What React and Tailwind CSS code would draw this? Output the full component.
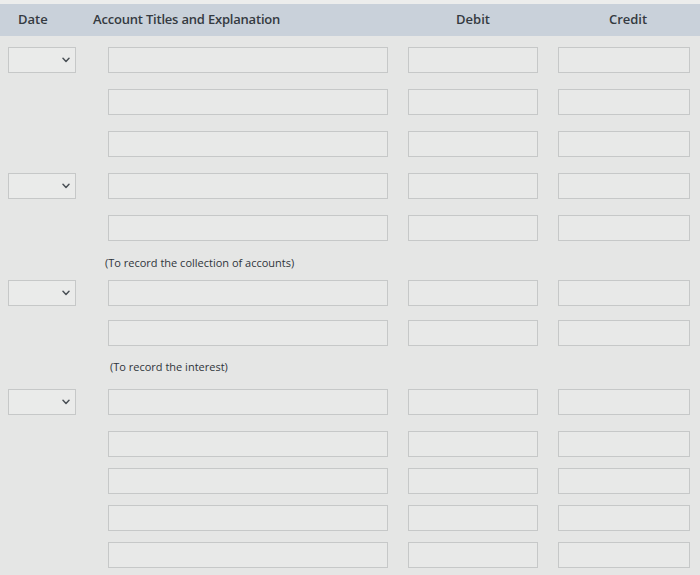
import { useState } from 'react'

// explanation lines under each journal entry
const NOTES = ['(To record the collection of accounts)', '(To record the interest)']

function Chevron() {
  return (
    <svg width="8" height="6" viewBox="0 0 8 6" className="text-[#4b5157]">
      <path d="M1 1.2 L4 4.4 L7 1.2" fill="none" stroke="currentColor" strokeWidth="1.5" strokeLinecap="round" strokeLinejoin="round" />
    </svg>
  )
}

function Box({ className = '' }) {
  return (
    <input
      type="text"
      className={`h-[26px] bg-[#e8e9e8] border border-[#c6c8c8] outline-none px-2 text-[12px] ${className}`}
    />
  )
}

function Row({ withDate, className = '' }) {
  const [val, setVal] = useState('')
  return (
    <div className={`flex items-center h-[26px] ${className}`}>
      <div className="w-[68px]">
        {withDate && (
          <div className="relative h-[26px] w-[68px] bg-[#eaebea] border border-[#c6c8c8] flex items-center justify-end pr-[5px]">
            <select
              value={val}
              onChange={e => setVal(e.target.value)}
              className="absolute inset-0 opacity-0"
            >
              <option value=""></option>
            </select>
            <Chevron />
          </div>
        )}
      </div>
      <Box className="ml-[32px] w-[280px]" />
      <Box className="ml-[20px] w-[130px]" />
      <Box className="ml-[20px] w-[132px]" />
    </div>
  )
}

export default function App() {
  return (
    <div className="w-[700px] h-[575px] overflow-hidden bg-[#e5e6e5] font-['Open_Sans',sans-serif] text-[#2f353b]">
      <div className="h-[4px] bg-[#ecedec]" />
      {/* Header */}
      <div className="h-[32px] bg-[#c9d1da] flex items-center text-[13px] font-semibold text-[#343a41]">
        <div className="w-[93px] pl-[18px]">Date</div>
        <div className="w-[315px] tracking-[-0.2px]">Account Titles and Explanation</div>
        <div className="w-[130px] text-center">Debit</div>
        <div className="w-[20px]" />
        <div className="w-[140px] text-center">Credit</div>
      </div>

      <div className="pl-[8px] pt-[11px] flex flex-col">
        {/* entry 1 */}
        <div className="flex flex-col gap-4">
          <Row withDate />
          <Row />
          <Row />
          <Row withDate />
          <Row />
        </div>
        <p className="mt-[14px] ml-[97px] text-[11px] leading-4">{NOTES[0]}</p>

        {/* entry 2 */}
        <div className="mt-[9px] flex flex-col gap-[14px]">
          <Row withDate />
          <Row />
        </div>
        <p className="mt-[13px] ml-[102px] text-[11px] leading-4">{NOTES[1]}</p>

        {/* entry 3 */}
        <div className="mt-[14px] flex flex-col gap-[11px]">
          <Row withDate className="mb-[5px]" />
          <Row />
          <Row />
          <Row />
          <Row />
        </div>
      </div>
    </div>
  )
}
